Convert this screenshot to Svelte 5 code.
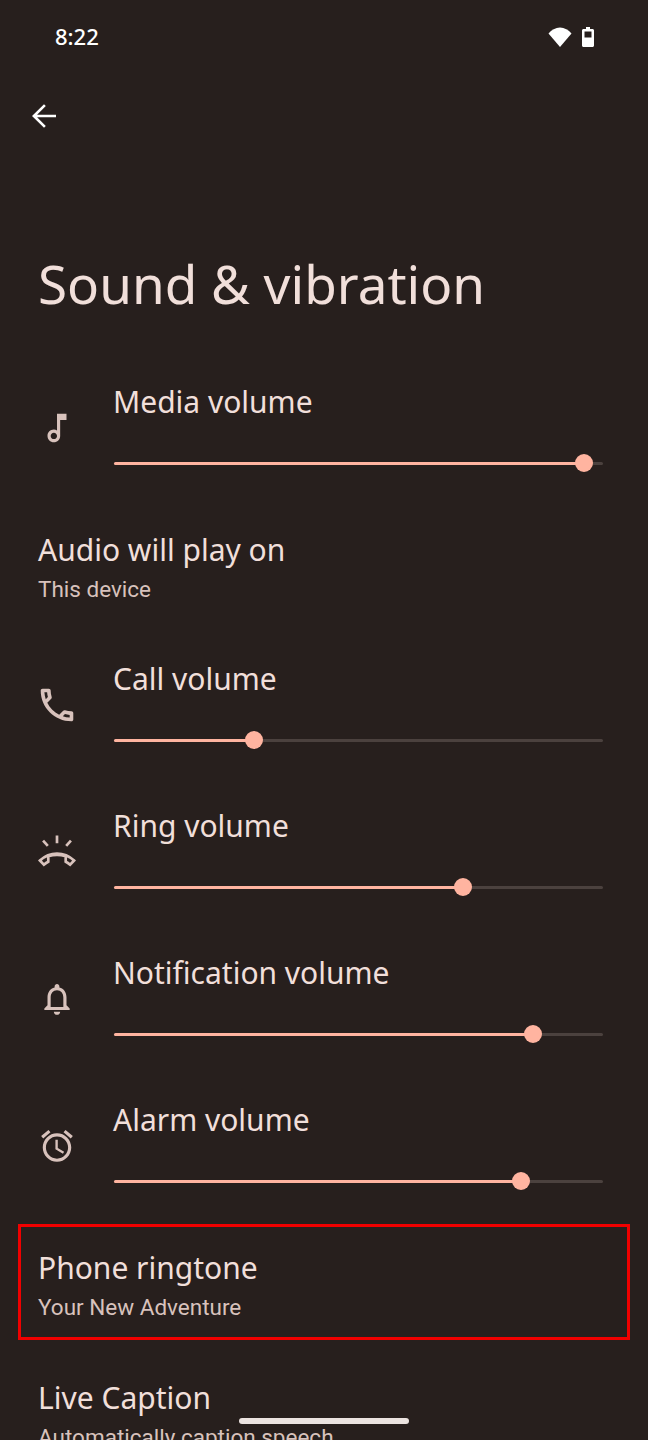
<script>
  const volumes = [
    { label: 'Call volume', value: 28.6, icon: 'call' },
    { label: 'Ring volume', value: 71.4, icon: 'ring' },
    { label: 'Notification volume', value: 85.7, icon: 'bell' },
    { label: 'Alarm volume', value: 83.3, icon: 'alarm' }
  ];
</script>

{#snippet icon(name)}
  <svg class="icon" viewBox={name === 'call' ? '1.5 1.5 21 21' : '0 0 24 24'}>
    {#if name === 'music'}
      <path d="M12 3l.01 10.55c-.59-.34-1.27-.55-2-.55C7.79 13 6 14.79 6 17s1.79 4 4 4 4-1.79 4-4V7h4V3h-6zm-1.99 16c-1.1 0-2-.9-2-2s.9-2 2-2 2 .9 2 2-.9 2-2 2z" />
    {:else if name === 'call'}
      <path d="M6.54 5c.06.89.21 1.76.45 2.59l-1.2 1.2c-.41-1.2-.67-2.47-.76-3.79h1.51m9.86 12.02c.85.24 1.72.39 2.6.45v1.49c-1.32-.09-2.59-.35-3.8-.75l1.2-1.19M7.5 3H4c-.55 0-1 .45-1 1 0 9.39 7.61 17 17 17 .55 0 1-.45 1-1v-3.49c0-.55-.45-1-1-1-1.24 0-2.45-.2-3.57-.57-.1-.04-.21-.05-.31-.05-.26 0-.51.1-.71.29l-2.2 2.2c-2.83-1.45-5.15-3.76-6.59-6.59l2.2-2.2c.28-.28.36-.67.25-1.02C8.7 6.45 8.5 5.25 8.5 4c0-.55-.45-1-1-1z" />
    {:else if name === 'ring'}
      <g class="line">
        <path d="M12 1.500v5M3.200 4.800l3 3.300M20.800 4.800l-3 3.300" />
        <path d="M1.200 17.400C4.200 14.600 7.800 13 12 13s7.800 1.600 10.800 4.400L20.300 20c-.9-.8-1.700-1.400-2.800-1.900v-3.400c-1.800-.5-3.600-.8-5.500-.8s-3.700.3-5.500.8v3.400c-1.100.5-1.900 1.100-2.800 1.900z" />
      </g>
    {:else if name === 'bell'}
      <path d="M12 22c1.100 0 2-.9 2-2h-4c0 1.100.9 2 2 2zm6-6v-5c0-3.070-1.630-5.640-4.500-6.320V4c0-.83-.67-1.500-1.500-1.500s-1.500.67-1.500 1.500v.68C7.640 5.360 6 7.920 6 11v5l-2 2v1h16v-1l-2-2zm-2 1H8v-6c0-2.480 1.510-4.500 4-4.500s4 2.020 4 4.500v6z" />
    {:else if name === 'alarm'}
      <path d="M22 5.720l-4.600-3.860-1.290 1.530 4.600 3.860L22 5.720zM7.880 3.390L6.600 1.860 2 5.710l1.290 1.530 4.590-3.850zM12.500 8H11v6l4.750 2.850.75-1.230-4-2.370V8zM12 4c-4.970 0-9 4.030-9 9s4.030 9 9 9 9-4.030 9-9-4.030-9-9-9zm0 16c-3.870 0-7-3.130-7-7s3.130-7 7-7 7 3.130 7 7-3.130 7-7 7z" />
    {/if}
  </svg>
{/snippet}

{#snippet slider(label, value, name)}
  <div class="slider-row">
    {@render icon(name)}
    <div class="slider-body">
      <div class="title">{label}</div>
      <div class="track">
        <div class="fill" style="width: {value}%"><span class="thumb"></span></div>
      </div>
    </div>
  </div>
{/snippet}

<div class="page">
  <div class="status">
    <span class="time">8:22</span>
    <div class="status-icons">
      <svg class="wifi" viewBox="0 0 24 20"><path d="M12 20L0.500 6.500C3.500 3 7.500 0.500 12 0.500s8.500 2.500 11.500 6z" /></svg>
      <svg class="battery" viewBox="0 0 12 20">
        <path fill-rule="evenodd" d="M4 0h4v2h2.500c.8 0 1.500.7 1.500 1.500V18.500c0 .8-.7 1.500-1.500 1.500h-9C.7 20 0 19.300 0 18.500V3.500C0 2.700.7 2 1.500 2H4zM2.500 4.500v6h7v-6z" />
      </svg>
    </div>
  </div>

  <div class="toolbar">
    <svg class="back" viewBox="0 0 24 24"><path d="M20 11.100H7.400l5.800-5.800L12 4.100 4 12l8 7.900 1.200-1.200-5.800-5.800H20z" /></svg>
  </div>

  <h1>Sound &amp; vibration</h1>

  {@render slider('Media volume', 96.1, 'music')}

  <div class="text-row">
    <div class="title">Audio will play on</div>
    <div class="sub">This device</div>
  </div>

  {#each volumes as v (v.label)}
    {@render slider(v.label, v.value, v.icon)}
  {/each}

  <div class="text-row highlighted">
    <div class="title">Phone ringtone</div>
    <div class="sub">Your New Adventure</div>
  </div>

  <div class="text-row">
    <div class="title">Live Caption</div>
    <div class="sub">Automatically caption speech</div>
  </div>

  <div class="nav-pill"></div>
</div>

<style>
  :global(body) {
    margin: 0;
    background: #271f1d;
  }

  .page {
    position: relative;
    width: 648px;
    height: 1440px;
    overflow: hidden;
    background: #271f1d;
    color: #f1dfda;
    font-family: "Noto Sans", Roboto, sans-serif;
  }

  .status {
    display: flex;
    justify-content: space-between;
    align-items: center;
    height: 73px;
    padding: 0 54px 0 55px;
    color: #fff;
  }

  .time {
    font-size: 22px;
    font-weight: 500;
    margin-top: -2px;
  }

  .status-icons {
    display: flex;
    align-items: center;
    gap: 10px;
  }

  .wifi {
    width: 24px;
    height: 20px;
    fill: #fff;
  }

  .battery {
    width: 12px;
    height: 20px;
    fill: #fff;
  }

  .toolbar {
    height: 87px;
    display: flex;
    align-items: flex-start;
    padding: 25px 0 0 26px;
    box-sizing: border-box;
  }

  .back {
    width: 36px;
    height: 36px;
    fill: #fff;
  }

  h1 {
    margin: 0;
    height: 195px;
    padding: 91px 0 0 38px;
    box-sizing: border-box;
    font-size: 53px;
    line-height: 66px;
    font-weight: 400;
  }

  .title {
    font-size: 30px;
    line-height: 40px;
  }

  .sub {
    font-family: Roboto, "Noto Sans", sans-serif;
    font-size: 22.500px;
    line-height: 30px;
    margin-top: 4px;
    color: #d8c2bc;
  }

  .slider-row {
    display: flex;
    height: 147px;
    padding-left: 38px;
    box-sizing: border-box;
  }

  .icon {
    flex: none;
    width: 38px;
    height: 38px;
    margin-top: 54px;
    fill: #d8c2bc;
  }

  .line {
    fill: none;
    stroke: #d8c2bc;
    stroke-width: 1.700;
  }

  .slider-body {
    flex: none;
    width: 489px;
    margin-left: 38px;
    padding-top: 27px;
  }

  .slider-body .title {
    margin-left: -1px;
  }

  .track {
    height: 3px;
    margin-top: 40px;
    background: #4b413e;
    border-radius: 2px;
  }

  .fill {
    position: relative;
    height: 100%;
    background: #ffb4a0;
    border-radius: 2px;
  }

  .thumb {
    position: absolute;
    right: -9px;
    top: -8px;
    width: 18px;
    height: 18px;
    border-radius: 50%;
    background: #ffb4a0;
  }

  .text-row {
    position: relative;
    height: 130px;
    padding: 27.500px 0 0 38px;
    box-sizing: border-box;
  }

  .highlighted::after {
    content: "";
    position: absolute;
    left: 18px;
    right: 18px;
    top: 4px;
    height: 116px;
    box-sizing: border-box;
    border: 3px solid #f00000;
  }

  .nav-pill {
    position: absolute;
    left: 239px;
    top: 1418px;
    width: 170px;
    height: 6px;
    border-radius: 3px;
    background: #ebe3e0;
  }
</style>
